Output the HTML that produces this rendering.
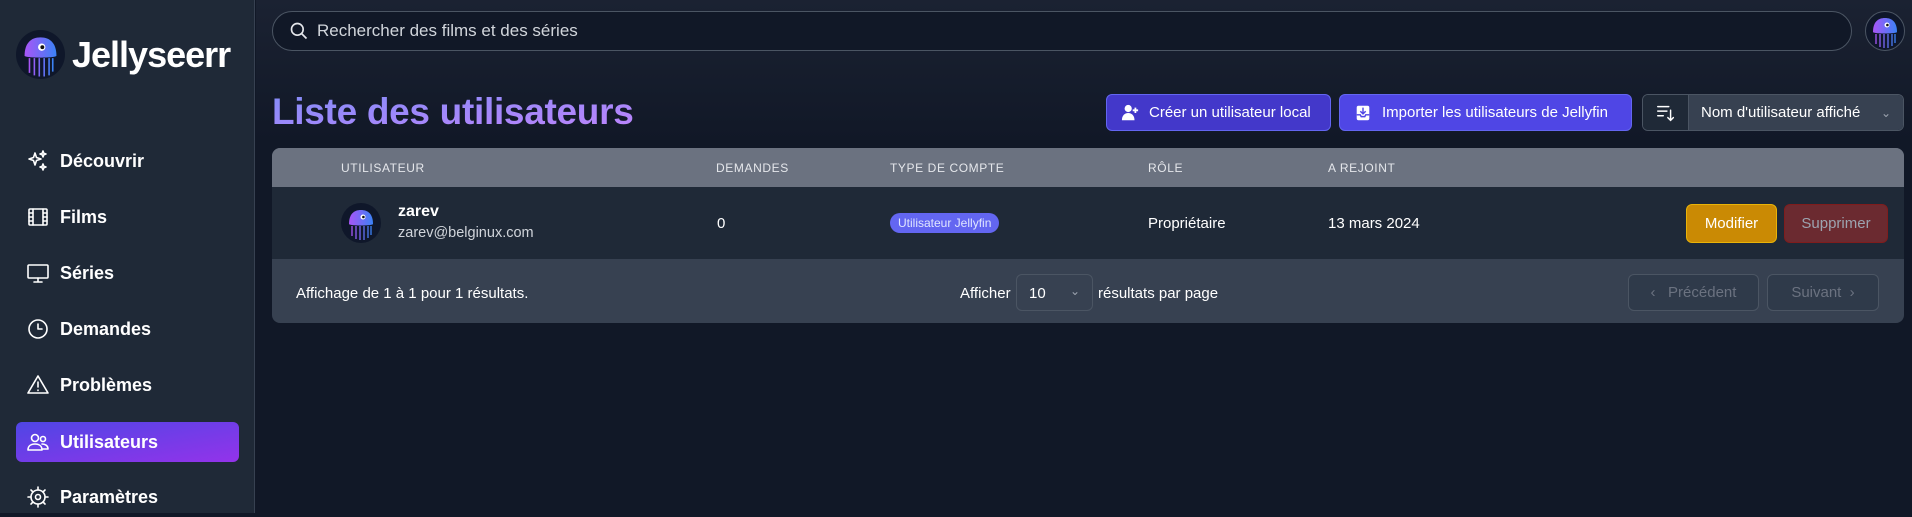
<!DOCTYPE html>
<html><head><meta charset="utf-8"><style>
*{box-sizing:border-box;margin:0;padding:0}
body{width:1912px;height:513px;overflow:hidden;background:#111827;font-family:"Liberation Sans",sans-serif;color:#fff;position:relative}
.side{position:absolute;left:0;top:0;width:255px;height:513px;background:#1f2937;border-right:1px solid #374151}
.logo{position:absolute;left:16px;top:30px;display:flex;align-items:center}
.logo span{font-size:36px;font-weight:bold;margin-left:7px;letter-spacing:-1px}
.nav{position:absolute;left:16px;width:223px;height:40px;display:flex;align-items:center;padding-left:10px;font-size:18px;font-weight:bold;color:#fff;border-radius:6px}
.nav svg{width:24px;height:24px;margin-right:10px;fill:none;stroke:#fff;stroke-width:1.6;stroke-linecap:round;stroke-linejoin:round}
.nav.act{background:linear-gradient(to bottom right,#4f46e5,#9333ea)}
.main{position:absolute;left:256px;top:0;right:0;height:513px;background:linear-gradient(#1b2232,#111827 140px)}
.search{position:absolute;left:272px;top:11px;width:1580px;height:40px;border:1px solid #4b5563;border-radius:20px;background:#111827;display:flex;align-items:center;padding-left:16px;color:#d1d5db;font-size:17px}
.search svg{margin-right:8px}
h1{position:absolute;left:272px;top:90px;font-size:37px;font-weight:bold;background:linear-gradient(to bottom right,#818cf8,#c084fc);-webkit-background-clip:text;color:transparent;line-height:44px;letter-spacing:-0.3px}
.btn{position:absolute;top:94px;height:37px;border-radius:6px;display:flex;align-items:center;font-size:15px;color:#fff;padding:0 14px}
.tbl{position:absolute;left:272px;top:148px;width:1632px;height:175px;border-radius:8px;overflow:hidden;background:#374151}
.th{position:absolute;top:0;left:0;right:0;height:39px;background:#6b7280}
.th div{position:absolute;top:13px;font-size:12px;letter-spacing:.6px;color:#e5e7eb}
.row{position:absolute;top:39px;left:0;right:0;height:72px;background:#1f2937}
.row .t{position:absolute;font-size:15px;color:#fff}
.foot{position:absolute;font-size:15px;color:#fff}
</style></head><body>
<div class="side">
 <div class="logo">
  <svg width="49" height="49" viewBox="0 0 40 40"><circle cx="20" cy="20" r="20" fill="#0f172a"/><defs><linearGradient id="g" x1="0" x2="1"><stop offset="0" stop-color="#a855f7"/><stop offset="1" stop-color="#3b82f6"/></linearGradient></defs><path d="M7 21C7 11 12 6 20 6S33 11 33 21C33 23 7 23 7 21Z" fill="url(#g)"/><circle cx="21" cy="14" r="3" fill="#fff"/><circle cx="21.5" cy="14" r="1.6" fill="#111"/><g stroke="url(#g)" stroke-width="1.3" fill="none"><path d="M11 23v12M15 23v14M19 23v15M23 23v15M27 23v14M30 23v11"/></g></svg>
  <span>Jellyseerr</span>
 </div>
 <div class="nav" style="top:141px"><svg viewBox="0 0 24 24"><path d="M9 4l1.5 4.5L15 10l-4.5 1.5L9 16l-1.5-4.5L3 10l4.5-1.5z"/><path d="M17 2l.8 2.2L20 5l-2.2.8L17 8l-.8-2.2L14 5l2.2-.8zM17 15l.8 2.2L20 18l-2.2.8L17 21l-.8-2.2L14 18l2.2-.8z"/></svg>Découvrir</div>
 <div class="nav" style="top:197px"><svg viewBox="0 0 24 24"><rect x="3" y="4" width="18" height="16" rx="1"/><path d="M7 4v16M17 4v16M3 8h4M3 12h4M3 16h4M17 8h4M17 12h4M17 16h4"/></svg>Films</div>
 <div class="nav" style="top:253px"><svg viewBox="0 0 24 24"><rect x="2" y="4" width="20" height="13" rx="1"/><path d="M8 21h8M12 17v4"/></svg>Séries</div>
 <div class="nav" style="top:309px"><svg viewBox="0 0 24 24"><circle cx="12" cy="12" r="9"/><path d="M12 7v5h4"/></svg>Demandes</div>
 <div class="nav" style="top:365px"><svg viewBox="0 0 24 24"><path d="M12 3L2 20h20z"/><path d="M12 9v5M12 17v.5"/></svg>Problèmes</div>
 <div class="nav act" style="top:422px"><svg viewBox="0 0 24 24"><circle cx="9" cy="8" r="3.5"/><circle cx="17" cy="9" r="2.5"/><path d="M2 20c0-4 3-6 7-6s7 2 7 6zM16 14c3 0 6 1.5 6 5h-5"/></svg>Utilisateurs</div>
 <div class="nav" style="top:477px"><svg viewBox="0 0 24 24"><circle cx="12" cy="12" r="7"/><circle cx="12" cy="12" r="2.5"/><path d="M12 2v3M12 19v3M2 12h3M19 12h3M5 5l2 2M17 17l2 2M5 19l2-2M17 7l2-2"/></svg>Paramètres</div>
</div>
<div class="main"></div>
<div class="search"><svg width="20" height="20" viewBox="0 0 24 24" fill="none" stroke="#e5e7eb" stroke-width="2"><circle cx="10" cy="10" r="7"/><path d="M15 15l6 6"/></svg>Rechercher des films et des séries</div>
<svg style="position:absolute;left:1865px;top:11px" width="40" height="40" viewBox="0 0 40 40"><circle cx="20" cy="20" r="19.5" fill="#0f172a" stroke="#4b5563"/><path d="M8 21C8 11 13 7 20 7S32 11 32 21C32 23 8 23 8 21Z" fill="url(#g)"/><circle cx="22" cy="14" r="2.5" fill="#fff"/><circle cx="22.4" cy="14" r="1.3" fill="#111"/><g stroke="url(#g)" stroke-width="1.3"><path d="M11 23v10M15 23v13M19 23v14M23 23v14M27 23v12M30 23v9"/></g></svg>
<h1>Liste des utilisateurs</h1>
<div class="btn" style="left:1106px;width:225px;background:#4338ca;border:1px solid #6366f1"><svg width="18" height="18" viewBox="0 0 20 20" fill="#fff" style="margin-right:10px"><circle cx="8" cy="5" r="4"/><path d="M1 18c0-5 3-8 7-8s7 3 7 8z"/><path d="M16 4v6M13 7h6" stroke="#fff" stroke-width="2"/></svg>Créer un utilisateur local</div>
<div class="btn" style="left:1339px;width:293px;background:#4f46e5;border:1px solid #6366f1"><svg width="18" height="18" viewBox="0 0 20 20" fill="#fff" style="margin-right:10px"><path d="M3 4a2 2 0 012-2h10a2 2 0 012 2v12a2 2 0 01-2 2H5a2 2 0 01-2-2z"/><path d="M10 4v7M7 8l3 3 3-3M3 12h4l1 2h4l1-2h4" stroke="#4f46e5" stroke-width="1.6" fill="none"/></svg>Importer les utilisateurs de Jellyfin</div>
<div style="position:absolute;left:1642px;top:94px;width:262px;height:37px;border:1px solid #4b5563;border-radius:6px;overflow:hidden;display:flex">
 <div style="width:46px;background:#1f2937;border-right:1px solid #4b5563;display:flex;align-items:center;justify-content:center"><svg width="22" height="22" viewBox="0 0 24 24" fill="none" stroke="#fff" stroke-width="1.6" stroke-linecap="round"><path d="M3 5h12M3 10h10M3 15h6M17 9v11M14 17l3 3 3-3"/></svg></div>
 <div style="flex:1;background:#374151;display:flex;align-items:center;padding-left:12px;font-size:15px;color:#fff">Nom d'utilisateur affiché<span style="margin-left:auto;margin-right:12px;color:#9ca3af;font-size:12px">&#8964;</span></div>
</div>
<div class="tbl">
 <div class="th"><div style="left:69px">UTILISATEUR</div><div style="left:444px">DEMANDES</div><div style="left:618px">TYPE DE COMPTE</div><div style="left:876px">RÔLE</div><div style="left:1056px">A REJOINT</div></div>
 <div class="row">
  <svg style="position:absolute;left:69px;top:16px" width="40" height="40" viewBox="0 0 40 40"><circle cx="20" cy="20" r="20" fill="#0f172a"/><path d="M8 21C8 11 13 7 20 7S32 11 32 21C32 23 8 23 8 21Z" fill="url(#g)"/><circle cx="22" cy="14" r="2.5" fill="#fff"/><circle cx="22.4" cy="14" r="1.3" fill="#111"/><g stroke="url(#g)" stroke-width="1.3"><path d="M11 23v10M15 23v13M19 23v14M23 23v14M27 23v12M30 23v9"/></g></svg>
  <div class="t" style="left:126px;top:16px;font-weight:bold;font-size:16px">zarev</div>
  <div class="t" style="left:126px;top:38px;color:#d1d5db;font-size:14.5px">zarev@belginux.com</div>
  <div class="t" style="left:445px;top:28px">0</div>
  <div style="position:absolute;left:618px;top:26px;height:20px;padding:0 8px;border-radius:10px;background:#6366f1;font-size:12px;line-height:20px;color:#e0e7ff">Utilisateur Jellyfin</div>
  <div class="t" style="left:876px;top:28px">Propriétaire</div>
  <div class="t" style="left:1056px;top:28px">13 mars 2024</div>
  <div style="position:absolute;left:1414px;top:17px;width:91px;height:39px;border-radius:6px;background:#ca8a04;border:1px solid #eab308;font-size:15px;display:flex;align-items:center;justify-content:center">Modifier</div>
  <div style="position:absolute;left:1512px;top:17px;width:104px;height:39px;border-radius:6px;background:#6b2a30;border:1px solid #7f1d1d;font-size:15px;color:#9ca3af;display:flex;align-items:center;justify-content:center">Supprimer</div>
 </div>
 <div class="foot" style="left:24px;top:137px">Affichage de 1 à 1 pour 1 résultats.</div>
 <div class="foot" style="left:688px;top:137px">Afficher</div>
 <div style="position:absolute;left:744px;top:126px;width:77px;height:37px;border:1px solid #4b5563;border-radius:6px;font-size:15px;padding:10px 0 0 12px">10<span style="position:absolute;right:12px;top:9px;color:#9ca3af;font-size:12px">&#8964;</span></div>
 <div class="foot" style="left:826px;top:137px">résultats par page</div>
 <div style="position:absolute;left:1356px;top:126px;width:131px;height:37px;border:1px solid #4b5563;border-radius:6px;background:#2f3a4a;color:#6b7280;font-size:15px;display:flex;align-items:center;justify-content:center">&#8249;&nbsp;&nbsp; Précédent</div>
 <div style="position:absolute;left:1495px;top:126px;width:112px;height:37px;border:1px solid #4b5563;border-radius:6px;background:#2f3a4a;color:#6b7280;font-size:15px;display:flex;align-items:center;justify-content:center">Suivant &nbsp;&#8250;</div>
</div>
</body></html>
